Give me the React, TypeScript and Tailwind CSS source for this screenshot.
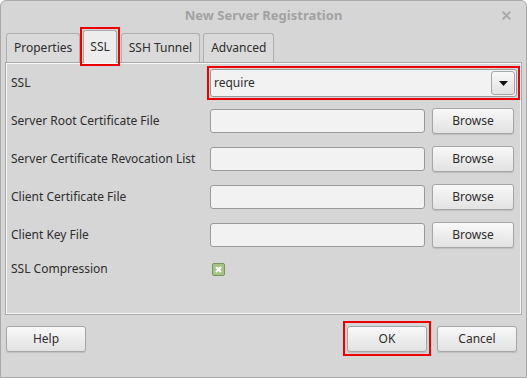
import { X } from 'lucide-react';

const FONT = { fontFamily: '"Noto Sans", "Open Sans", sans-serif' };

const TABS = ['Properties', 'SSL', 'SSH Tunnel', 'Advanced'];

const FILE_ROWS = [
  'Server Root Certificate File',
  'Server Certificate Revocation List',
  'Client Certificate File',
  'Client Key File',
];

function Button({ label, wide = 'w-[82px]' }: { label: string; wide?: string }) {
  return (
    <button
      className={`${wide} h-[26px] rounded-[3px] border border-[#a6a6a6] text-[12px] text-[#2e2e2e] bg-gradient-to-b from-[#f8f8f8] to-[#e2e2e2] shadow-[0_1px_1px_rgba(0,0,0,0.12)]`}
    >
      {label}
    </button>
  );
}

export default function App() {
  return (
    <div
      className="w-[527px] h-[378px] bg-[#d6d6d6] border border-[#a9a9a9] rounded-t-[6px] flex flex-col overflow-hidden"
      style={FONT}
    >
      {/* Title bar */}
      <div className="h-[29px] grid grid-cols-[1fr_auto_1fr] items-center">
        <div />
        <div className="text-[13px] font-bold text-[#a2a2a2]">New Server Registration</div>
        <div className="flex justify-end pr-[13px]">
          <X size={13} strokeWidth={3.5} className="text-[#a8a8a8]" />
        </div>
      </div>

      {/* Tabs */}
      <div className="flex items-end gap-[3px] pl-[5px] h-[32px]">
        {TABS.map(t => {
          const active = t === 'SSL';
          const tab = (
            <div
              className={`rounded-t-[3px] border border-b-0 text-[12px] text-[#2e2e2e] flex items-center ${
                active ? 'px-[6px] h-[33px] bg-[#ededed] border-[#a9a9a9]' : 'px-[7px] h-[29px] bg-[#dadada] border-[#b0b0b0]'
              }`}
            >
              {t}
            </div>
          );
          return active ? (
            <div key={t} className="outline-2 outline-[#ee0000] outline-offset-[1px] relative z-10 -mb-[1px] mr-[1px]">
              {tab}
            </div>
          ) : (
            <div key={t}>{tab}</div>
          );
        })}
      </div>

      {/* Panel */}
      <div className="mx-[4px] h-[253px] border border-[#a9a9a9] shadow-[inset_0_0_0_1px_#f7f7f7] px-[5px] pt-[6px] text-[12px] text-[#2e2e2e] whitespace-nowrap">
        <div className="grid grid-cols-[199px_1fr] items-center">
          <div>SSL</div>
          <div className="outline-2 outline-[#ee0000] outline-offset-[1px] mr-[-1px]">
            <div className="h-[28px] flex items-center rounded-[3px] border border-[#9a9a9a] bg-[#f2f2f2]">
              <div className="flex-1 px-[3px]">require</div>
              <div className="w-[24px] h-[24px] mr-[1px] rounded-[3px] border border-[#a6a6a6] bg-gradient-to-b from-[#f8f8f8] to-[#e2e2e2] flex items-center justify-center">
                <svg width="9" height="5" viewBox="0 0 9 5">
                  <path d="M0 0h9L4.5 5z" fill="#111" />
                </svg>
              </div>
            </div>
          </div>
        </div>

        <div className="mt-[11px] flex flex-col gap-[12px]">
          {FILE_ROWS.map(l => (
            <div key={l} className="grid grid-cols-[199px_1fr] items-center h-[26px]">
              <div>{l}</div>
              <div className="flex items-center gap-[7px]">
                <div className="w-[215px] h-[24px] rounded-[3px] border border-[#9a9a9a] bg-[#f2f2f2]" />
                <Button label="Browse" />
              </div>
            </div>
          ))}
          <div className="grid grid-cols-[199px_1fr] items-center h-[18px]">
            <div>SSL Compression</div>
            <div className="pl-[2px]">
              <div className="w-[13px] h-[13px] rounded-[2px] border border-[#7a9660] bg-[#a6c488] flex items-center justify-center">
                <svg width="7" height="7" viewBox="0 0 7 7">
                  <path d="M1 1l5 5M6 1l-5 5" stroke="#fff" strokeWidth="2" />
                </svg>
              </div>
            </div>
          </div>
        </div>
      </div>

      {/* Footer buttons */}
      <div className="flex items-center mt-[10px] pl-[5px] pr-[9px]">
        <Button label="Help" wide="w-[80px]" />
        <div className="flex-1" />
        <div className="outline-2 outline-[#ee0000] outline-offset-[2px]">
          <Button label="OK" wide="w-[80px]" />
        </div>
        <div className="w-[10px]" />
        <Button label="Cancel" wide="w-[80px]" />
      </div>
    </div>
  );
}
